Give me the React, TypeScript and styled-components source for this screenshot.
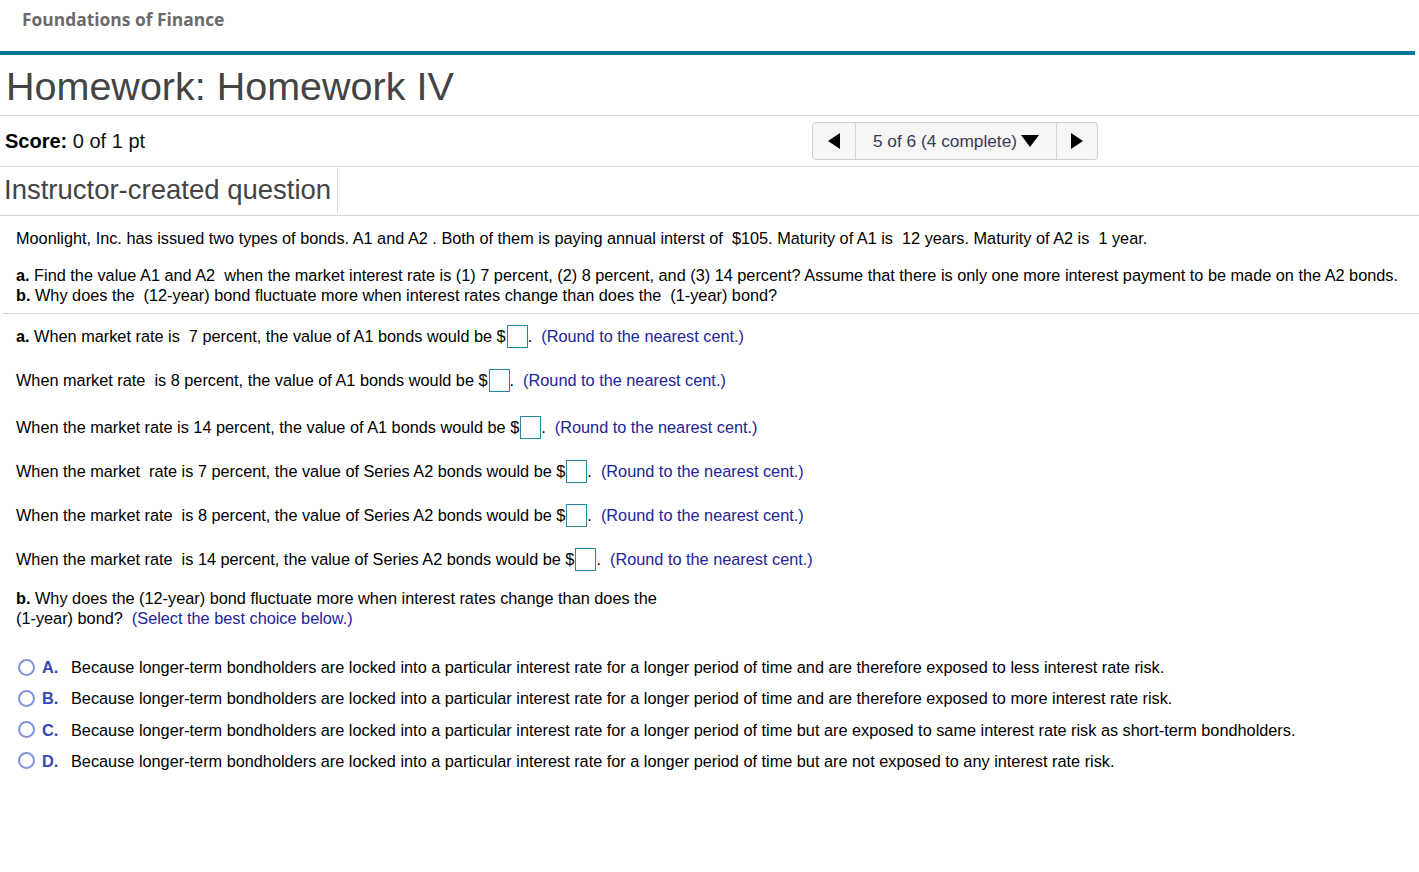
import styled, { createGlobalStyle } from 'styled-components';

const GlobalStyle = createGlobalStyle`
  html, body {
    margin: 0;
    padding: 0;
    background: #ffffff;
  }
  body {
    font-family: "Liberation Sans", Arial, sans-serif;
    color: #000;
  }
`;

const Page = styled.div`
  width: 1419px;
  min-height: 872px;
`;

const CourseBar = styled.header`
  height: 51px;
  border-bottom: 4px solid #00789d;
  margin-right: 4px;
  display: flex;
  align-items: flex-start;
  padding-left: 22px;
  box-sizing: content-box;
`;

const CourseName = styled.div`
  font-family: "Open Sans", sans-serif;
  font-weight: 700;
  font-size: 17.4px;
  color: #6a6a6a;
  line-height: 20px;
  margin-top: 9px;
`;

const TitleRow = styled.div`
  height: 60px;
  border-bottom: 1px solid #d2d5dc;
  display: flex;
  align-items: center;
  padding-left: 6px;
`;

const Title = styled.h1`
  margin: 0;
  font-weight: 400;
  font-size: 39.5px;
  color: #444;
  line-height: 48px;
  margin-top: 1px;
`;

const ScoreRow = styled.div`
  height: 50px;
  border-bottom: 1px solid #d2d5dc;
  display: flex;
  align-items: center;
  padding-left: 5px;
`;

const Score = styled.div`
  font-size: 20px;
  color: #111;
  flex: 1;
  margin-top: 1px;

  b {
    font-weight: 700;
    color: #000;
  }
`;

const Nav = styled.div`
  display: flex;
  height: 38px;
  border: 1px solid #cfcfcf;
  border-radius: 4px;
  background: #f6f6f6;
  margin-right: 321px;
  box-sizing: border-box;
`;

const NavSeg = styled.div<{ $w: number; $last?: boolean }>`
  width: ${(p) => p.$w}px;
  display: flex;
  align-items: center;
  justify-content: center;
  border-right: ${(p) => (p.$last ? 'none' : '1px solid #d6d6d6')};
  font-size: 17.3px;
  color: #3a3a55;
  gap: 4px;
`;

const Tri = styled.svg`
  display: block;
`;

const SectionRow = styled.div`
  height: 48px;
  border-bottom: 1px solid #d2d5dc;
  display: flex;
`;

const SectionTitle = styled.h2`
  margin: 0;
  font-weight: 400;
  font-size: 27.5px;
  color: #444;
  padding: 0 6px 0 4px;
  border-right: 1px solid #d2d5dc;
  display: flex;
  align-items: center;
  margin-top: 1px;
  height: 44px;
`;

const Body = styled.div`
  padding: 0 0 0 16px;
  font-size: 16.3px;
  line-height: 20px;
`;

const Para = styled.p<{ $mt: number }>`
  margin: ${(p) => p.$mt}px 0 0;
`;

const Divider = styled.hr`
  border: none;
  border-top: 1px solid #d2d5dc;
  margin: 8px 0 0 -13px;
`;

const AnswerRow = styled.div<{ $mt: number }>`
  display: flex;
  align-items: center;
  height: 24px;
  margin-top: ${(p) => p.$mt}px;
  white-space: pre;
`;

const Blank = styled.span`
  display: inline-block;
  width: 19px;
  height: 21px;
  border: 1px solid #2b86a6;
  margin-left: 1px;
`;

const Hint = styled.span`
  color: #23239a;
`;

const Choices = styled.div`
  margin-top: 29px;
  display: flex;
  flex-direction: column;
  gap: 11.3px;
`;

const Choice = styled.div`
  display: flex;
  align-items: center;
  height: 20px;
`;

const Radio = styled.span`
  width: 13px;
  height: 13px;
  border: 2px solid #8192dc;
  border-radius: 50%;
  margin-left: 2px;
  flex: none;
`;

const Letter = styled.span`
  color: #3646b6;
  font-weight: 700;
  width: 29px;
  margin-left: 7px;
`;

const choices = [
  ['A.', 'Because longer-term bondholders are locked into a particular interest rate for a longer period of time and are therefore exposed to less interest rate risk.'],
  ['B.', 'Because longer-term bondholders are locked into a particular interest rate for a longer period of time and are therefore exposed to more interest rate risk.'],
  ['C.', 'Because longer-term bondholders are locked into a particular interest rate for a longer period of time but are exposed to same interest rate risk as short-term bondholders.'],
  ['D.', 'Because longer-term bondholders are locked into a particular interest rate for a longer period of time but are not exposed to any interest rate risk.'],
];

const answers: { lead?: string; text: string; mt: number }[] = [
  { lead: 'a.', text: ' When market rate is  7 percent, the value of A1 bonds would be $', mt: 10 },
  { text: 'When market rate  is 8 percent, the value of A1 bonds would be $', mt: 20 },
  { text: 'When the market rate is 14 percent, the value of A1 bonds would be $', mt: 23 },
  { text: 'When the market  rate is 7 percent, the value of Series A2 bonds would be $', mt: 20 },
  { text: 'When the market rate  is 8 percent, the value of Series A2 bonds would be $', mt: 20 },
  { text: 'When the market rate  is 14 percent, the value of Series A2 bonds would be $', mt: 20 },
];

export default function App() {
  return (
    <Page>
      <GlobalStyle />
      <CourseBar>
        <CourseName>Foundations of Finance</CourseName>
      </CourseBar>
      <TitleRow>
        <Title>Homework: Homework IV</Title>
      </TitleRow>
      <ScoreRow>
        <Score>
          <b>Score:</b> 0 of 1 pt
        </Score>
        <Nav>
          <NavSeg $w={42}>
            <Tri width="12" height="16" viewBox="0 0 12 16">
              <polygon points="12,0 12,16 0,8" fill="#000" />
            </Tri>
          </NavSeg>
          <NavSeg $w={200}>
            5 of 6 (4 complete)
            <Tri width="18" height="12" viewBox="0 0 18 12">
              <polygon points="0,0 18,0 9,12" fill="#000" />
            </Tri>
          </NavSeg>
          <NavSeg $w={40} $last>
            <Tri width="12" height="16" viewBox="0 0 12 16">
              <polygon points="0,0 12,8 0,16" fill="#000" />
            </Tri>
          </NavSeg>
        </Nav>
      </ScoreRow>
      <SectionRow>
        <SectionTitle>Instructor-created question</SectionTitle>
      </SectionRow>
      <Body>
        <Para $mt={12}>
          Moonlight, Inc. has issued two types of bonds. A1 and A2 . Both of them is paying annual interst of&nbsp; $105. Maturity of A1 is&nbsp; 12 years. Maturity of A2 is&nbsp; 1 year.
        </Para>
        <Para $mt={17}>
          <b>a.</b> Find the value A1 and A2&nbsp; when the market interest rate is (1) 7 percent, (2) 8 percent, and (3) 14 percent? Assume that there is only one more interest payment to be made on the A2 bonds.
          <br />
          <b>b.</b> Why does the&nbsp; (12-year) bond fluctuate more when interest rates change than does the&nbsp; (1-year) bond?
        </Para>
        <Divider />
        {answers.map((a, i) => (
          <AnswerRow key={i} $mt={a.mt}>
            {a.lead && <b>{a.lead}</b>}
            {a.text}
            <Blank />
            {'.  '}
            <Hint>(Round to the nearest cent.)</Hint>
          </AnswerRow>
        ))}
        <Para $mt={17}>
          <b>b.</b> Why does the (12-year) bond fluctuate more when interest rates change than does the
          <br />
          (1-year) bond?&nbsp; <Hint>(Select the best choice below.)</Hint>
        </Para>
        <Choices>
          {choices.map(([l, t]) => (
            <Choice key={l}>
              <Radio />
              <Letter>{l}</Letter>
              {t}
            </Choice>
          ))}
        </Choices>
      </Body>
    </Page>
  );
}
